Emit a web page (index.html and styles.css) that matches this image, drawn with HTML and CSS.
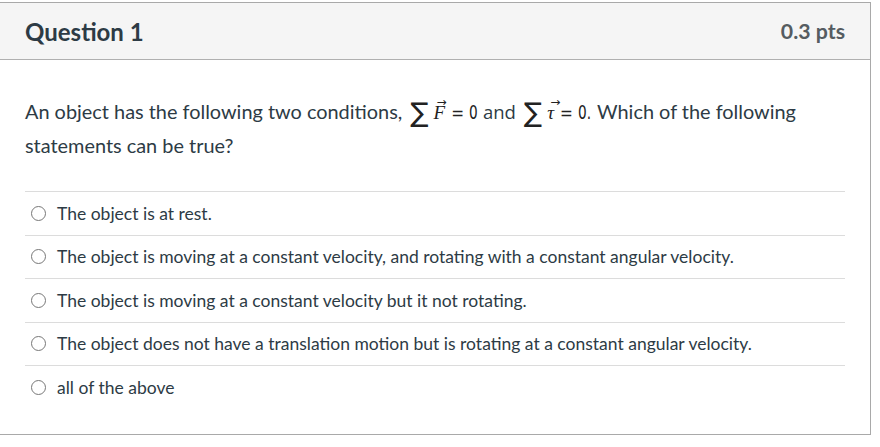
FILE: index.html
```html
<!DOCTYPE html>
<html>
<head>
<meta charset="utf-8">
<link rel="stylesheet" href="styles.css">
</head>
<body>
<div class="card">
  <div class="header">
    <div class="title">Question 1</div>
    <div class="pts">0.3 pts</div>
  </div>
  <div class="body">
    <p class="question">An object has the following two conditions, <span class="math"><span class="sum">∑</span><span class="vec"><span class="arrow">→</span><i>F</i></span><span class="eq">=</span><span class="num">0</span></span> <span class="and">and</span> <span class="math"><span class="sum">∑</span><span class="vec"><span class="arrow">→</span><i>τ</i></span><span class="eq">=</span><span class="num">0.</span></span> Which of the following statements can be true?</p>
    <div class="answers">
      <div class="answer"><span class="radio"></span><span class="label">The object is at rest.</span></div>
      <div class="answer"><span class="radio"></span><span class="label">The object is moving at a constant velocity, and rotating with a constant angular velocity.</span></div>
      <div class="answer"><span class="radio"></span><span class="label">The object is moving at a constant velocity but it not rotating.</span></div>
      <div class="answer"><span class="radio"></span><span class="label">The object does not have a translation motion but is rotating at a constant angular velocity.</span></div>
      <div class="answer"><span class="radio"></span><span class="label">all of the above</span></div>
    </div>
  </div>
</div>
</body>
</html>
```

FILE: styles.css
```css
* { box-sizing: border-box; }
html, body { margin: 0; padding: 0; background: #fff; }
body {
  font-family: Lato, "Noto Sans", sans-serif;
  color: #2d3b45;
  width: 880px;
  height: 447px;
  overflow: hidden;
}
.card {
  margin-top: 2px;
  width: 871px;
  height: 433px;
  border: 1px solid #a9a9a9;
  border-left: none;
}
.header {
  height: 57px;
  background: #f5f5f5;
  border-bottom: 1px solid #b0b0b0;
  display: flex;
  align-items: center;
  justify-content: space-between;
  padding: 0 25px 0 25px;
}
.title {
  font-weight: 700;
  font-size: 24px;
  color: #2d3b45;
}
.pts {
  font-weight: 700;
  font-size: 21.3px;
  color: #555c61;
}
.body {
  padding: 0 25px;
}
.question {
  margin: 0;
  padding-top: 35px;
  font-size: 19.9px;
  line-height: 32px;
  height: 131px;
}
.math {
  font-family: "DejaVu Serif", serif;
  display: inline-flex;
  align-items: baseline;
  color: #222;
  margin-left: 3px;
}
.sum {
  font-family: "DejaVu Sans", sans-serif;
  font-size: 27px;
  line-height: 20px;
  position: relative;
  top: 3px;
  margin-right: 5px;
}
.vec {
  position: relative;
  display: inline-block;
  line-height: 20px;
}
.vec i { font-family: "Liberation Serif", serif; font-size: 19px; }
.arrow {
  position: absolute;
  top: -7px;
  left: 3px;
  font-size: 12px;
  line-height: 12px;
  font-family: "DejaVu Sans", sans-serif;
}
.eq {
  font-family: "DejaVu Sans Condensed", "DejaVu Sans", sans-serif;
  font-size: 17px;
  margin-left: 6px;
}
.num {
  font-family: "DejaVu Sans Condensed", "DejaVu Sans", sans-serif;
  font-size: 19px;
  margin-left: 5px;
  transform: scaleX(0.8);
  transform-origin: left;
  display: inline-block;
  margin-right: -2px;
}
.and {
  font-family: "Open Sans", sans-serif;
  font-size: 18.5px;
}
.answers {
  border-top: 1px solid #dcdcdc;
}
.answer {
  height: 43.5px;
  display: flex;
  align-items: center;
  border-bottom: 1px solid #dcdcdc;
  padding-left: 6px;
}
.answer:last-child { border-bottom: none; }
.radio {
  width: 15px;
  height: 15px;
  border: 1.5px solid #777;
  border-radius: 50%;
  flex: none;
  margin-right: 11px;
}
.label {
  font-size: 17.5px;
}
```
